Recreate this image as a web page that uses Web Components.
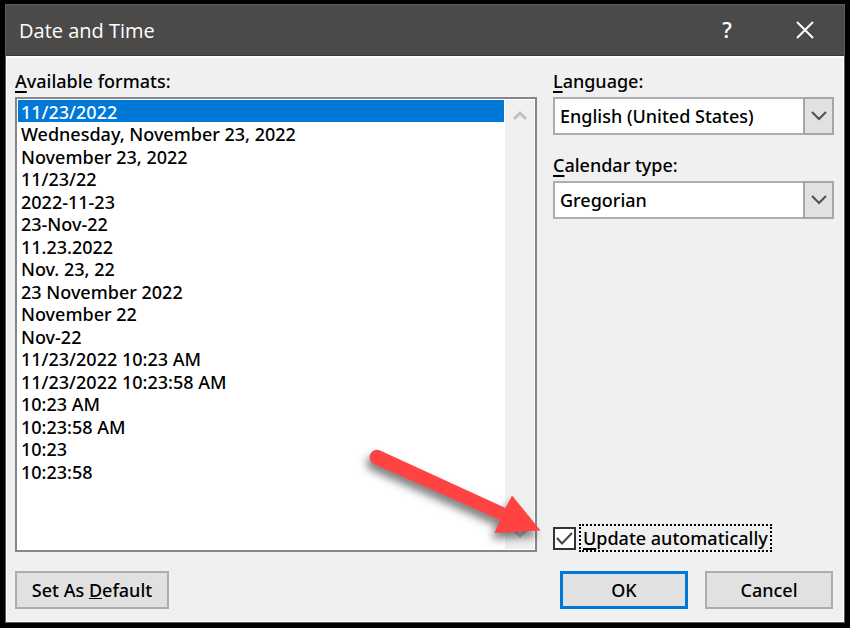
<!DOCTYPE html>
<html lang="en">
<head>
<meta charset="utf-8">
<title>Date and Time</title>
<style>
  body {
    background: #000;
    box-sizing: border-box;
    color: #000;
    display: flex;
    font: 500 18px/22px "Noto Sans", "Open Sans", sans-serif;
    margin: 0;
    min-height: 100vh;
    padding: 4px 5px 5px;
  }

  .columns {
    display: grid;
    flex: 1;
    column-gap: 16px;
    grid-template-columns: 1fr 281px;
  }

  .side {
    display: flex;
    flex-direction: column;
    gap: 19px;
  }

  .side check-field {
    margin-top: auto;
  }

  .actions {
    display: flex;
    gap: 17px;
    justify-content: flex-end;
    padding-right: 1px;
  }

  .actions :first-child {
    margin-right: auto;
  }
</style>
</head>
<body>
  <dialog-window heading="Date and Time">
    <div class="columns">
      <format-list><u>A</u>vailable formats:</format-list>
      <div class="side">
        <combo-field value="English (United States)"><u>L</u>anguage:</combo-field>
        <combo-field value="Gregorian"><u>C</u>alendar type:</combo-field>
        <check-field><u>U</u>pdate automatically</check-field>
      </div>
    </div>
    <div class="actions">
      <push-button wide><span>Set As <u>D</u>efault</span></push-button>
      <push-button primary>OK</push-button>
      <push-button>Cancel</push-button>
    </div>
  </dialog-window>

<script>
  // Underlines for the access keys, shared by every label
  const accessKey = `
    ::slotted(u) {
      text-decoration: underline;
      text-decoration-thickness: 2px;
      text-underline-offset: 3px;
    }
  `;

  // Window frame with the title bar
  class DialogWindow extends HTMLElement {
    constructor() {
      super();
      this.attachShadow({ mode: 'open' });
    }

    connectedCallback() {
      this.shadowRoot.innerHTML = `
        <style>
          :host {
            background: #f0f0f0;
            border: 1px solid #5c5b59;
            box-sizing: border-box;
            display: flex;
            flex: 1;
            flex-direction: column;
          }

          header {
            align-items: center;
            background: #4c4a48;
            border-bottom: 1px solid #3a3937;
            color: #fff;
            display: flex;
            height: 50px;
            padding-left: 13px;
          }

          h1 {
            flex: 1;
            font: 400 20px/22px "Open Sans", sans-serif;
            margin: 0;
            padding-top: 2px;
          }

          button {
            align-items: center;
            background: none;
            border: 0;
            color: inherit;
            display: flex;
            font: 600 21px "Open Sans", sans-serif;
            height: 50px;
            justify-content: center;
            padding: 0;
            width: 78px;
          }

          main {
            border: 1px solid #fff;
            border-top-width: 2px;
            display: flex;
            flex: 1;
            flex-direction: column;
            gap: 19px;
            padding: 12px 9px 12px 8px;
          }
        </style>
        <header>
          <h1>${this.getAttribute('heading')}</h1>
          <button type="button">?</button>
          <button type="button" aria-label="Close">
            <svg width="18" height="18" viewBox="0 0 18 18" fill="none" stroke="#fff" stroke-width="2">
              <path d="M1 1 17 17M17 1 1 17"/>
            </svg>
          </button>
        </header>
        <main><slot></slot></main>
      `;
    }
  }

  // List box with its scroll bar and the pointer arrow
  class FormatList extends HTMLElement {
    constructor() {
      super();
      this.attachShadow({ mode: 'open' });
    }

    connectedCallback() {
      const formats = [
        '11/23/2022',
        'Wednesday, November 23, 2022',
        'November 23, 2022',
        '11/23/22',
        '2022-11-23',
        '23-Nov-22',
        '11.23.2022',
        'Nov. 23, 22',
        '23 November 2022',
        'November 22',
        'Nov-22',
        '11/23/2022 10:23 AM',
        '11/23/2022 10:23:58 AM',
        '10:23 AM',
        '10:23:58 AM',
        '10:23',
        '10:23:58'
      ];
      this.shadowRoot.innerHTML = `
        <style>
          ${accessKey}
          :host {
            display: flex;
            flex-direction: column;
            gap: 5px;
          }

          .box {
            background: #fff;
            border: 2px solid #828790;
            display: flex;
            flex: 1;
            padding: 1px;
            position: relative;
          }

          select {
            background: none;
            border: 0;
            border-radius: 0;
            color: inherit;
            flex: 1;
            font: inherit;
            margin: 0;
            outline: 0;
            overflow: hidden;
            padding: 0;
          }

          option {
            box-sizing: border-box;
            font-weight: 500;
            height: 22px;
            line-height: 22px;
            min-height: 0;
            padding: 0 3px;
          }

          option:nth-child(even) {
            height: 23px;
          }

          option:checked {
            background: #0078d7 linear-gradient(#0078d7, #0078d7);
            -webkit-text-fill-color: #fff;
          }

          .scroll {
            align-items: center;
            background: #f0f0f0;
            display: flex;
            flex-direction: column;
            justify-content: space-between;
            margin-left: 1px;
            padding: 9px 0;
            width: 29px;
          }

          .pointer {
            bottom: -10px;
            filter: drop-shadow(-3px 6px 4px rgb(0 0 0 / 50%));
            pointer-events: none;
            position: absolute;
            right: -25px;
          }
        </style>
        <label for="formats"><slot></slot></label>
        <div class="box">
          <select id="formats" size="17">
            ${formats.map((text, i) => `<option${i ? '' : ' selected'}>${text}</option>`).join('')}
          </select>
          <div class="scroll">
            <svg width="14" height="12" viewBox="0 0 14 12" fill="none" stroke="#bfbfbf" stroke-width="3">
              <path d="M1 10 7 4 13 10"/>
            </svg>
            <svg width="14" height="12" viewBox="0 0 14 12" fill="none" stroke="#bfbfbf" stroke-width="3">
              <path d="M1 2 7 8 13 2"/>
            </svg>
          </div>
          <svg class="pointer" width="200" height="120" viewBox="360 440 200 120" fill="#ff4242">
            <path d="M380 450.500 505.500 508 512 495.500 540.500 530.500 494.500 533 500 520 374 464A7.200 7.200 0 0 1 380 450.500Z"/>
          </svg>
        </div>
      `;
    }
  }

  // Label above a drop-down
  class ComboField extends HTMLElement {
    constructor() {
      super();
      this.attachShadow({ mode: 'open' });
    }

    connectedCallback() {
      this.shadowRoot.innerHTML = `
        <style>
          ${accessKey}
          :host {
            display: flex;
            flex-direction: column;
            gap: 5px;
          }

          .combo {
            display: grid;
            grid-template-columns: 1fr 31px;
          }

          select {
            appearance: none;
            background: #fff;
            border: 2px solid #abadb3;
            border-radius: 0;
            color: inherit;
            font: inherit;
            grid-area: 1 / 1 / 2 / 3;
            height: 38px;
            margin: 0;
            padding: 0 5px;
          }

          .arrow {
            align-items: center;
            background: #e1e1e1;
            border: 2px solid #a5a7aa;
            display: flex;
            grid-area: 1 / 2;
            justify-content: center;
            pointer-events: none;
          }
        </style>
        <label for="combo"><slot></slot></label>
        <div class="combo">
          <select id="combo"><option>${this.getAttribute('value')}</option></select>
          <span class="arrow">
            <svg width="16" height="10" viewBox="0 0 16 10" fill="none" stroke="#505050" stroke-width="2">
              <path d="M1 1 8 8 15 1"/>
            </svg>
          </span>
        </div>
      `;
    }
  }

  // Tick box with a focused label
  class CheckField extends HTMLElement {
    constructor() {
      super();
      this.attachShadow({ mode: 'open' });
    }

    connectedCallback() {
      this.shadowRoot.innerHTML = `
        <style>
          ${accessKey}
          :host {
            align-items: center;
            display: flex;
            gap: 3px;
          }

          .check {
            display: grid;
          }

          input {
            appearance: none;
            background: #fff;
            border: 2px solid #333;
            box-sizing: border-box;
            grid-area: 1 / 1;
            height: 23px;
            margin: 0;
            width: 23px;
          }

          svg {
            grid-area: 1 / 1;
            pointer-events: none;
            visibility: hidden;
          }

          input:checked + svg {
            visibility: visible;
          }

          label {
            border: 2px dotted #000;
            padding: 1px 2px;
          }
        </style>
        <span class="check">
          <input id="check" type="checkbox" checked>
          <svg width="23" height="23" viewBox="0 0 23 23" fill="none" stroke="#444" stroke-width="2">
            <path d="M4 11 9 16.500 19 6"/>
          </svg>
        </span>
        <label for="check"><slot></slot></label>
      `;
    }
  }

  class PushButton extends HTMLElement {
    constructor() {
      super();
      this.attachShadow({ mode: 'open' });
      this.shadowRoot.innerHTML = `
        <style>
          :host {
            display: flex;
            width: 128px;
          }

          :host([wide]) {
            width: 154px;
          }

          button {
            background: #e1e1e1;
            border: 2px solid #adadad;
            color: inherit;
            flex: 1;
            font: inherit;
            height: 38px;
            padding: 0;
          }

          :host([primary]) button {
            border: 3px solid #0078d7;
          }
        </style>
        <button type="button"><slot></slot></button>
      `;
    }
  }

  customElements.define('dialog-window', DialogWindow);
  customElements.define('format-list', FormatList);
  customElements.define('combo-field', ComboField);
  customElements.define('check-field', CheckField);
  customElements.define('push-button', PushButton);
</script>
</body>
</html>
